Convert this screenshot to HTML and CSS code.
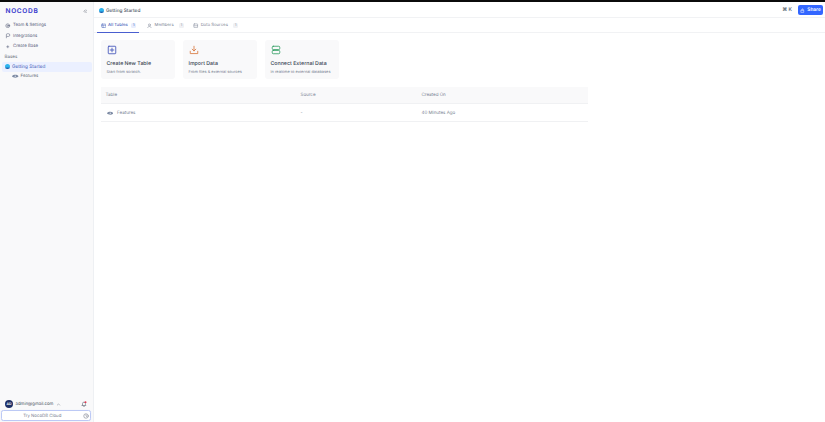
FILE: index.html
```html
<!DOCTYPE html>
<html lang="en">
<head>
<meta charset="utf-8">
<title>Getting Started</title>
<link rel="stylesheet" href="styles.css">
</head>
<body>
<div class="topline"></div>
<div class="app">
  <aside class="sidebar">
    <div class="brand">
      <span class="logo">NOCODB</span>
      <svg class="collapse" viewBox="0 0 8 8"><path d="M4 1.500 1.500 4 4 6.500M7 1.500 4.500 4 7 6.500"/></svg>
    </div>
    <nav class="menu">
      <div class="menu-item"><svg class="mi" viewBox="0 0 8 8"><circle cx="4" cy="4" r="2.800"/><circle cx="4" cy="4" r="1"/></svg>Team &amp; Settings</div>
      <div class="menu-item"><svg class="mi" viewBox="0 0 8 8"><path d="M2 7V2.500A1.500 1.500 0 0 1 3.500 1H5a1.500 1.500 0 0 1 0 4H3"/></svg>Integrations</div>
      <div class="menu-item"><svg class="mi" viewBox="0 0 8 8"><path d="M2.500 4h3M4 2.500v3"/></svg>Create Base</div>
    </nav>
    <div class="section">Bases</div>
    <div class="base active"><span class="dot"></span>Getting Started</div>
    <div class="base child"><svg class="eye" viewBox="0 0 10 6"><path class="eye-fill" d="M0 3C2 0 8 0 10 3 8 6 2 6 0 3Z"/><circle class="eye-pupil" cx="5" cy="3" r="1"/></svg>Features</div>
    <div class="spacer"></div>
    <div class="user">
      <span class="avatar">AD</span>
      <span class="email">admin@gmail.com</span>
      <svg class="chev" viewBox="0 0 8 8"><path d="M2 5 4 3l2 2"/></svg>
      <svg class="bell" viewBox="0 0 8 8"><path d="M1.500 6h5L6 5V3.500a2 2 0 0 0-4 0V5ZM3.300 7h1.400"/><circle class="bell-dot" cx="6" cy="1.500" r="1.300"/></svg>
    </div>
    <div class="cloud">
      <span class="cloud-text">Try NocoDB Cloud</span>
      <svg class="cloud-icon" viewBox="0 0 8 8"><circle cx="4" cy="4" r="3"/><path d="M4 2.500V4l1 .7"/></svg>
    </div>
  </aside>
  <main class="main">
    <header class="topbar">
      <span class="dot"></span>
      <span class="title">Getting Started</span>
      <span class="kbd">⌘ K</span>
      <span class="share"><svg class="lock" viewBox="0 0 8 8"><path d="M2 3.500h4V7H2ZM3 3.500V2.300a1 1 0 0 1 2 0v1.200"/></svg>Share</span>
    </header>
    <div class="tabs">
      <div class="tab on"><svg class="ti" viewBox="0 0 8 8"><rect x="1" y="1.500" width="6" height="5" rx=".8"/><path d="M1 3.300h6M3 3.300v3.200"/></svg>All Tables<span class="count">1</span></div>
      <div class="tab"><svg class="ti" viewBox="0 0 8 8"><circle cx="3.500" cy="2.800" r="1.500"/><path d="M1 7c0-3 5-3 5 0"/></svg>Members<span class="count">1</span></div>
      <div class="tab"><svg class="ti" viewBox="0 0 8 8"><rect x="1.300" y="1.300" width="5.400" height="5.400" rx=".6"/><path d="M1.300 4h5.400"/></svg>Data Sources<span class="count">1</span></div>
    </div>
    <section class="cards">
      <article class="card">
        <svg class="card-icon blue" viewBox="0 0 12 12"><rect x="1.500" y="1.500" width="9" height="9" rx=".8"/><path d="M6 3.800v4.400M3.800 6h4.400"/></svg>
        <h2>Create New Table</h2>
        <p>Start from scratch.</p>
      </article>
      <article class="card">
        <svg class="card-icon orange" viewBox="0 0 12 12"><path d="M6 1.500v5.500M3.800 5 6 7.200 8.200 5M1.500 7.500v2.800h9V7.500"/></svg>
        <h2>Import Data</h2>
        <p>From files &amp; external sources</p>
      </article>
      <article class="card">
        <svg class="card-icon green" viewBox="0 0 12 12"><rect x="1.500" y="1.500" width="9" height="4" rx="1.200"/><rect x="1.500" y="6.500" width="9" height="4" rx="1.200"/></svg>
        <h2>Connect External Data</h2>
        <p>In realtime to external databases</p>
      </article>
    </section>
    <section class="table">
      <div class="row head"><span class="c1">Table</span><span class="c2">Source</span><span class="c3">Created On</span></div>
      <div class="row body"><span class="c1 name"><svg class="eye" viewBox="0 0 10 6"><path class="eye-fill" d="M0 3C2 0 8 0 10 3 8 6 2 6 0 3Z"/><circle class="eye-pupil" cx="5" cy="3" r="1"/></svg>Features</span><span class="c2">-</span><span class="c3">40 Minutes Ago</span></div>
    </section>
  </main>
</div>
</body>
</html>
```
FILE: styles.css
```css
* { box-sizing: border-box; }
html, body { margin: 0; height: 100%; overflow: hidden; background: #fff; }
body { font-family: Inter, "Liberation Sans", sans-serif; color: #374151; display: flex; flex-direction: column; text-rendering: geometricPrecision; }
svg { display: block; fill: none; stroke-linecap: round; stroke-linejoin: round; }

.topline { height: 2px; background: #0b0b0b; flex: none; }
.app { flex: 1; display: flex; min-height: 0; }

.sidebar { width: 94px; flex: none; background: #f9f9fa; border-right: 1px solid #eef0f3; display: flex; flex-direction: column; }
.brand { height: 17px; display: flex; align-items: center; padding: 1px 6px 0 5.500px; justify-content: space-between; }
.logo { font-size: 6.500px; font-weight: 700; letter-spacing: .7px; color: #3f42cf; }
.collapse { width: 4.500px; height: 4.500px; stroke: #6b7280; stroke-width: .9; }
.menu { margin-top: 1px; display: flex; flex-direction: column; }
.menu-item { height: 10.700px; display: flex; align-items: center; gap: 2.500px; padding-left: 5px; font-size: 4.350px; color: #59617a; }
.mi { width: 5.500px; height: 5.500px; stroke: #59617a; stroke-width: .8; }
.section { font-size: 4.500px; color: #6b7280; margin: 3.100px 0 0 4.500px; height: 6px; line-height: 6px; }
.base { height: 10px; display: flex; align-items: center; font-size: 4.700px; }
.active { margin: .500px 1.500px 0 1.500px; padding-left: 3.500px; gap: 2px; background: #ebf0ff; border-radius: 2px; color: #3f5cb8; }
.child { padding-left: 12px; gap: 2px; color: #6b7280; font-size: 4.350px; }
.dot { width: 5px; height: 5.500px; flex: none; border-radius: 50% 50% 45% 45%; background: linear-gradient(#2fb5ee 55%, #174a9c); }
.eye { width: 6.500px; height: 4.500px; flex: none; }
.eye-fill { fill: #7c8aa3; }
.eye-pupil { fill: #e4e8f0; }
.spacer { flex: 1; }
.user { height: 10px; display: flex; align-items: center; padding-left: 5px; font-size: 4.350px; color: #4b5563; }
.avatar { width: 8px; height: 8px; border-radius: 50%; background: #1e2f66; color: #fff; font-size: 3.500px; font-weight: 600; display: flex; align-items: center; justify-content: center; flex: none; }
.email { margin-left: 2.500px; white-space: nowrap; }
.chev { width: 5px; height: 5px; margin-left: 3px; stroke: #6b7280; stroke-width: .7; }
.bell { width: 6px; height: 6px; margin-left: auto; margin-right: 6px; stroke: #4b5563; stroke-width: .7; }
.bell-dot { fill: #e5344d; stroke: none; }
.cloud { height: 11px; margin: 1px 2px 1px 1px; border: 1px solid #bcc9f5; border-radius: 2.500px; background: #fff; display: flex; align-items: center; font-size: 4.350px; color: #7b8494; box-shadow: 0 0 1px #dbe3fb; }
.cloud-text { flex: 1; text-align: center; padding-top: 1.500px; }
.cloud-icon { width: 6px; height: 6px; margin-right: 1.500px; stroke: #6b7280; stroke-width: .7; }

.main { flex: 1; min-width: 0; display: flex; flex-direction: column; }
.topbar { height: 16px; display: flex; align-items: center; padding: 1.500px 2px 0 5px; gap: 2px; border-bottom: 1px solid #f1f2f4; }
.title { padding-top: 1px; font-size: 4.750px; font-weight: 500; color: #4b5563; flex: 1; }
.kbd { font-size: 5px; font-weight: 500; color: #4b5563; margin-right: 4px; }
.share { height: 10px; width: 25px; border-radius: 2px; background: #3366ff; color: #fff; font-size: 4.800px; font-weight: 600; display: flex; align-items: center; justify-content: center; gap: 2px; }
.lock { width: 5px; height: 5px; stroke: #fff; stroke-width: .8; }

.tabs { height: 15px; display: flex; padding-left: 3px; border-bottom: 1px solid #f1f2f4; }
.tab { display: flex; align-items: center; gap: 2px; padding: .500px 1px 0 3.500px; margin-right: 4.500px; font-size: 4.300px; color: #7b8494; white-space: nowrap; margin-bottom: -1px; border-bottom: 1px solid transparent; }
.tab.on { width: 42px; padding-right: 0; color: #3f5cb8; font-weight: 500; border-bottom-color: #4a5fd0; }
.ti { width: 5.500px; height: 5.500px; flex: none; stroke: currentColor; stroke-width: .7; }
.count { margin-left: 3px; min-width: 5.500px; height: 5.500px; padding: 0 1px; border-radius: 1.500px; background: #f0f1f4; font-size: 3.500px; display: flex; align-items: center; justify-content: center; }
.on .count { margin-left: 1px; background: #e8edfd; }

.cards { display: flex; gap: 8px; padding: 7px 0 0 7px; }
.card { width: 74px; height: 39px; background: #f9f9fa; border-radius: 3px; padding: 5px 5.500px 0; }
.card-icon { width: 10px; height: 10px; stroke-width: 1; }
.blue { stroke: #3d4fb8; }
.orange { stroke: #d9783f; }
.green { stroke: #2f9e62; }
.card h2 { margin: 5px 0 0; font-size: 5.250px; line-height: 8px; font-weight: 500; color: #374151; white-space: nowrap; }
.card p { margin: .500px 0 0; font-size: 3.900px; line-height: 6px; color: #7b8494; white-space: nowrap; }

.table { margin: 8px 0 0 7px; width: 487px; }
.row { display: grid; grid-template-columns: 195px 121px 1fr; align-items: center; font-size: 4.500px; color: #7b8494; }
.head { height: 17px; padding-top: 1px; background: #f9f9fa; border-bottom: 1px solid #f0f1f3; }
.body { height: 18px; padding-top: 1px; border-bottom: 1px solid #f0f1f3; }
.row span { padding-left: 4.500px; }
.name { display: flex; align-items: center; gap: 4px; padding-left: 5.500px !important; }
```
